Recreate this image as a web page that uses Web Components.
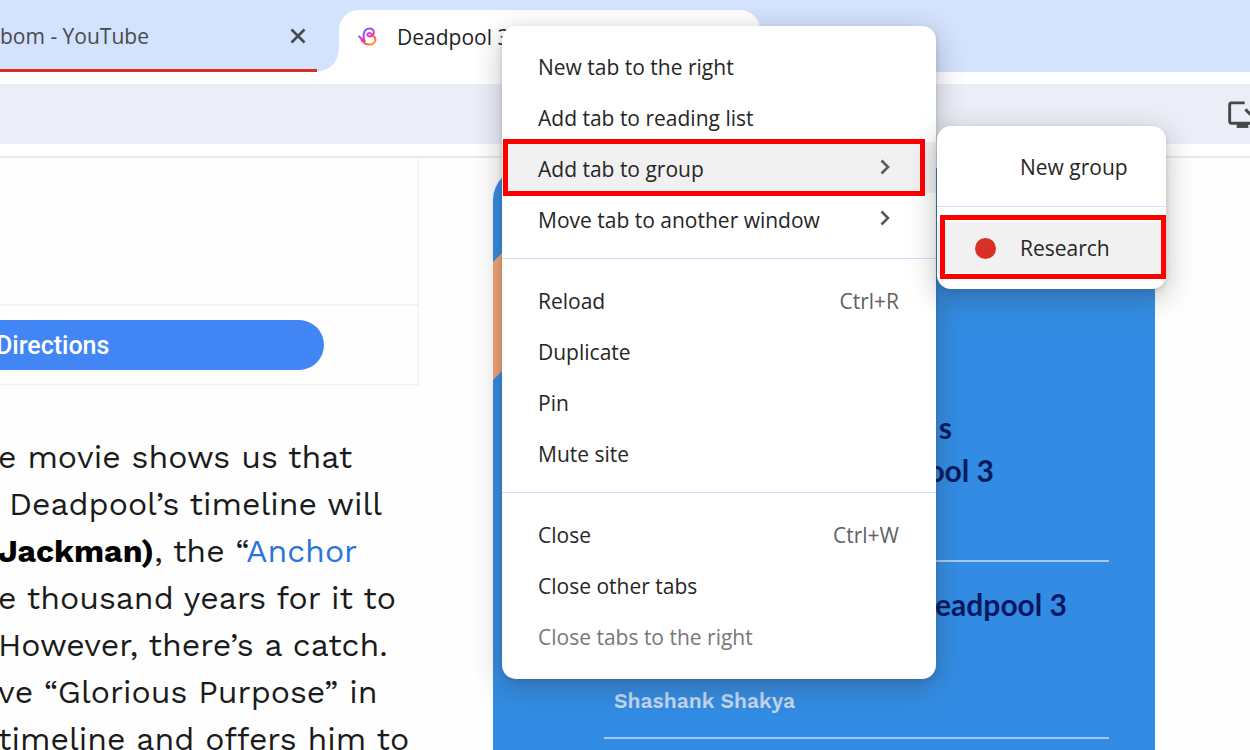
<!DOCTYPE html>
<html lang="en">
<head>
<meta charset="utf-8">
<title>Deadpool 3</title>
<style>
  html, body { margin: 0; height: 100%; }
  body { overflow: hidden; background: #fff; color: #1f1f1f; font-family: "Open Sans", "Noto Sans", sans-serif; }
</style>
</head>
<body>
<browser-window>
  <tab-strip slot="tabs">
    <browser-tab grouped>bom - YouTube</browser-tab>
    <browser-tab active>Deadpool 3</browser-tab>
  </tab-strip>
  <address-bar slot="toolbar"></address-bar>
  <map-card slot="main"></map-card>
  <article-text slot="main"></article-text>
  <story-list slot="side">
    <story-item end="157">s<br><span>Deadpool 3</span></story-item>
    <story-item end="42" author="Shashank Shakya">Deadpool 3</story-item>
  </story-list>
</browser-window>

<context-menu class="tab-menu" label="Tab menu">
  <menu-entry>New tab to the right</menu-entry>
  <menu-entry>Add tab to reading list</menu-entry>
  <menu-entry submenu marked>Add tab to group</menu-entry>
  <menu-entry submenu>Move tab to another window</menu-entry>
  <menu-divider></menu-divider>
  <menu-entry keys="Ctrl+R">Reload</menu-entry>
  <menu-entry>Duplicate</menu-entry>
  <menu-entry>Pin</menu-entry>
  <menu-entry>Mute site</menu-entry>
  <menu-divider></menu-divider>
  <menu-entry keys="Ctrl+W">Close</menu-entry>
  <menu-entry>Close other tabs</menu-entry>
  <menu-entry disabled>Close tabs to the right</menu-entry>
</context-menu>

<context-menu class="group-menu" label="Tab groups">
  <menu-entry indent>New group</menu-entry>
  <menu-divider></menu-divider>
  <menu-entry indent dot marked>Research</menu-entry>
</context-menu>

<style>
  .tab-menu { left: 502px; top: 26px; width: 434px; }
  .group-menu { left: 937px; top: 126px; width: 229px; }
</style>

<script>
const define = (name, render) => customElements.define(name, class extends HTMLElement {
  constructor() {
    super();
    this.attachShadow({ mode: 'open' });
  }
  connectedCallback() {
    this.shadowRoot.innerHTML = render(this);
  }
});

define('browser-window', () => `
  <style>
    :host { display: flex; flex-direction: column; height: 100vh; overflow: hidden; }
    .page { flex: 1; min-height: 0; display: grid; grid-template-columns: 419fr 662fr; column-gap: 74px;
            padding-right: 95px; border-top: 2px solid #e9e9e6; background: #fefefe; overflow: hidden; }
    main, aside { min-width: 0; }
  </style>
  <header><slot name="tabs"></slot><slot name="toolbar"></slot></header>
  <div class="page">
    <main><slot name="main"></slot></main>
    <aside><slot name="side"></slot></aside>
  </div>`);

define('tab-strip', () => `
  <style>
    :host { display: flex; align-items: flex-end; gap: 22px; height: 72px; background: #d3e2fd; }
  </style>
  <slot></slot>`);

define('browser-tab', host => host.hasAttribute('active') ? `
  <style>
    :host { position: relative; display: flex; align-items: center; box-sizing: border-box; width: 421px; height: 62px;
            padding: 0 19px 9px; gap: 20px; background: #fff; border-radius: 20px 20px 0 0; font-size: 21px; line-height: 30px; }
    :host::before { content: ""; position: absolute; left: -22px; bottom: 0; width: 22px; height: 22px;
            background: radial-gradient(circle at 0 0, transparent 21px, #fff 22px); }
    :host::after { content: ""; position: absolute; right: -22px; bottom: 0; width: 22px; height: 22px;
            background: radial-gradient(circle at 100% 0, transparent 21px, #fff 22px); }
    svg { width: 19px; height: 19px; flex: none; }
    span { white-space: nowrap; }
  </style>
  <svg viewBox="0 0 19 19" fill="none" stroke="url(#g)" stroke-width="2" stroke-linecap="round" stroke-linejoin="round" aria-hidden="true">
    <defs><linearGradient id="g" gradientUnits="userSpaceOnUse" x1="4" y1="1" x2="16" y2="18">
      <stop offset="0" stop-color="#3f7cf6"/><stop offset=".3" stop-color="#a04cf0"/>
      <stop offset=".55" stop-color="#f23aa0"/><stop offset=".8" stop-color="#ff6a35"/><stop offset="1" stop-color="#ffb52b"/>
    </linearGradient></defs>
    <path d="M1.200 9.500 5.500 13.500M3 11.500C4 14.500 6.500 17 10 17.500c4 .6 7.500-1.500 7.500-4.800 0-2-1-3.200-2.500-4.200"/>
    <path d="M6.800 14.500C4.500 9 5.500 3.500 9.500 1.900c3.500-1.300 6.700.8 6.400 3.800-.3 2.600-2.600 4-4.900 3.600-1.800-.4-2.200-2.200-.8-3 1.400-.7 3.300.2 4.800 2.200"/>
  </svg>
  <span><slot></slot></span>` : `
  <style>
    :host { display: flex; align-items: center; justify-content: space-between; box-sizing: border-box; width: 317px; height: 72px;
            padding: 3px 8px 0 0; border-bottom: 3px solid #d93025; color: #474a4d; font-size: 21px; line-height: 30px; white-space: nowrap; }
    button { display: grid; place-items: center; width: 22px; height: 22px; border: 0; padding: 0; background: none; color: inherit; }
    svg { width: 16px; height: 16px; }
  </style>
  <span><slot></slot></span>
  <button aria-label="Close tab"><svg viewBox="0 0 16 16" stroke="currentColor" stroke-width="2.600"><path d="M1.500 1.500l13 13M14.500 1.500l-13 13"/></svg></button>`);

define('address-bar', () => `
  <style>
    :host { display: block; background: #fff; padding: 12px 0; }
    .field { display: flex; align-items: center; justify-content: flex-end; height: 60px; background: #ebeef7; overflow: hidden; }
    button { flex: none; display: grid; border: 0; padding: 0; margin-right: -10px; background: none; color: #474747; }
    svg { width: 35px; height: 35px; fill: none; stroke: currentColor; stroke-width: 2; stroke-linejoin: round; }
  </style>
  <div class="field">
    <button aria-label="Install app"><svg viewBox="0 0 24 24">
      <path d="M13.500 4H4.500Q3.200 4 3.200 5.300V16.700Q3.200 18 4.500 18H19.500Q20.800 18 20.800 16.700V14"/>
      <path d="M8 19.800h8" stroke-width="2.800"/>
      <path d="M18.500 3v9M14 8.500l4.500 4.500 4.500-4.500" stroke-linejoin="miter"/>
    </svg></button>
  </div>`);

define('map-card', () => `
  <style>
    :host { display: block; border: 1px solid #f0f0f0; border-width: 0 1px 1px 0; margin-bottom: 49px; }
    .map { height: 146px; border-bottom: 2px solid #f3f3f3; }
    .actions { padding: 14px 94px 14px 0; display: flex; }
    button { flex: 1; height: 50px; margin-left: -26px; padding: 2px 0 0 22px; border: 0; border-radius: 25px; background: #4285f4;
             color: #fff; font: 500 25px/30px Roboto, sans-serif; text-align: left; }
  </style>
  <div class="map"></div>
  <div class="actions"><button>Directions</button></div>`);

define('article-text', () => `
  <style>
    :host { display: block; font: 400 32px/47px "Work Sans", Inter, sans-serif; color: #1b1b1b; }
    p { margin: 0 0 0 -2px; white-space: pre; }
    b { color: #000; font-weight: 700; }
    a { color: #2a75dc; text-decoration: none; }
  </style>
  <p>e movie shows us that<br> Deadpool’s timeline will<br><b>Jackman)</b>, the “<a href="#">Anchor</a><br>e thousand years for it to<br>However, there’s a catch.<br>ve “Glorious Purpose” in<br>timeline and offers him to</p>`);

define('story-list', () => `
  <style>
    :host { display: block; position: relative; height: 900px; margin-top: 10px; background: #338ce4; border-radius: 32px 32px 0 0; overflow: hidden; }
    .art { display: block; height: 217px; }
    .art svg { display: block; width: 120px; height: 217px; }
    .items { margin: 0 46px 0 111px; }
  </style>
  <div class="art"><svg viewBox="0 0 120 217" aria-hidden="true"><path fill="#f2a477" d="M0 94 60 34V152L0 212z"/></svg></div>
  <div class="items"><slot></slot></div>`);

define('story-item', host => `
  <style>
    :host { display: flex; flex-direction: column; justify-content: space-between; box-sizing: border-box; height: 177px; padding: 21px 0 20px;
            border-bottom: 2px solid #a3caf3; }
    h3 { margin: 0; padding-right: ${host.getAttribute('end')}px; text-align: right;
         font: 700 30px/43px Lato, sans-serif; color: #04195f; }
    ::slotted(span) { margin-right: -42px; }
    p { margin: 0; padding-left: 10px; font: 600 21px/32px "Work Sans", Inter, sans-serif; color: #c4d8ef; }
  </style>
  <h3><slot></slot></h3>
  ${host.hasAttribute('author') ? `<p>${host.getAttribute('author')}</p>` : ''}`);

define('context-menu', host => `
  <style>
    :host { position: absolute; box-sizing: border-box; padding: 14px 0 18px; background: #fff; border-radius: 14px;
            box-shadow: 0 8px 28px rgba(50,50,50,.32), 0 2px 5px rgba(50,50,50,.14); }
    :host(.group-menu) { padding: 15px 0 16px; }
  </style>
  <div role="menu" aria-label="${host.getAttribute('label')}"><slot></slot></div>`);

define('menu-divider', () => `
  <style>:host { display: block; height: 1px; margin: 14px 0 15px; background: #cfe0fa; }</style>`);

define('menu-entry', host => `
  <style>
    :host { display: block; position: relative; }
    button { display: flex; align-items: center; width: 100%; height: 51px; box-sizing: border-box; border: 0; margin: 0;
             padding: 2px 37px 0 36px; background: none; color: #262626; font: 400 21px/30px "Open Sans", "Noto Sans", sans-serif; text-align: left; white-space: nowrap; }
    :host([indent]) button { padding: 1px 37px 0 38px; }
    :host([marked]) button { background: #f1f1f1; }
    button:disabled { color: #76787b; }
    .text { flex: 1; }
    .keys { color: #5f6164; }
    .lead { width: 21px; height: 21px; margin-right: 24px; border-radius: 50%; }
    :host([dot]) .lead { background: #d93025; }
    .chevron { width: 10px; height: 16px; margin: 0 9px 3px 0; }
    .mark { position: absolute; inset: -3px 11px -3px 1px; border: 5px solid #fe0000; pointer-events: none; }
    :host([indent]) .mark { inset: -7px 0 -6px 3px; }
  </style>
  <button role="menuitem" ${host.hasAttribute('disabled') ? 'disabled' : ''}>
    ${host.hasAttribute('indent') ? '<span class="lead"></span>' : ''}
    <span class="text"><slot></slot></span>
    ${host.hasAttribute('keys') ? `<span class="keys">${host.getAttribute('keys')}</span>` : ''}
    ${host.hasAttribute('submenu') ? '<svg class="chevron" viewBox="0 0 10 16" fill="none" stroke="#5a5a5a" stroke-width="2.600"><path d="M1.500 1.500 8 8l-6.500 6.500"/></svg>' : ''}
  </button>
  ${host.hasAttribute('marked') ? '<div class="mark"></div>' : ''}`);
</script>
</body>
</html>
